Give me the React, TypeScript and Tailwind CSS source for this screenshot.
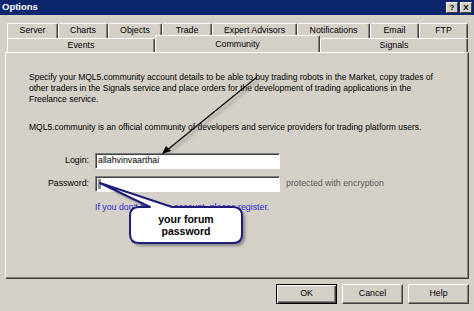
const font = { fontFamily: '"Liberation Sans", Arial, sans-serif' };

const topTabs = [
  { label: 'Server', w: 'w-[51px]' },
  { label: 'Charts', w: 'w-[50px]' },
  { label: 'Objects', w: 'w-[54px]' },
  { label: 'Trade', w: 'w-[50px]' },
  { label: 'Expert Advisors', w: 'w-[85px]' },
  { label: 'Notifications', w: 'w-[73px]' },
  { label: 'Email', w: 'w-[49px]' },
  { label: 'FTP', w: 'w-[49px]' },
];

function Tab({ label, w }: { label: string; w: string }) {
  return (
    <div
      className={`${w} flex h-full items-center justify-center rounded-t-[2px] border-t border-l border-r border-t-white border-l-white border-r-[#404040] shadow-[inset_-1px_0_0_#808080]`}
    >
      {label}
    </div>
  );
}

function Button({ label, primary }: { label: string; primary?: boolean }) {
  return (
    <div
      className={`flex h-[20px] w-[61px] items-center justify-center ${
        primary
          ? 'border border-black shadow-[inset_1px_1px_0_#fff,inset_-1px_-1px_0_#404040,inset_-2px_-2px_0_#808080]'
          : 'border border-t-white border-l-white border-r-[#404040] border-b-[#404040] shadow-[inset_-1px_-1px_0_#808080]'
      }`}
    >
      {label}
    </div>
  );
}

function Field({ children }: { children?: React.ReactNode }) {
  return (
    <div className="flex h-[16px] w-[185px] items-center border border-t-[#808080] border-l-[#808080] border-r-white border-b-white bg-white pl-[2px] shadow-[inset_1px_1px_0_#404040]">
      {children}
    </div>
  );
}

export default function App() {
  return (
    <div
      className="relative h-[311px] w-[474px] overflow-hidden bg-[#d4d0c8] text-[8.5px] text-black"
      style={font}
    >
      {/* title bar */}
      <div className="flex h-[15px] items-center justify-between bg-[#0b266c] pl-[2px] pr-[2px]">
        <span className="text-[9.5px] font-bold text-white">Options</span>
        <div className="flex gap-[2px]">
          <div className="flex h-[11px] w-[12px] items-center justify-center border border-t-white border-l-white border-r-[#404040] border-b-[#404040] bg-[#d4d0c8] text-[8px] font-bold">
            ?
          </div>
          <div className="flex h-[11px] w-[12px] items-center justify-center border border-t-white border-l-white border-r-[#404040] border-b-[#404040] bg-[#d4d0c8] text-[8px] font-bold">
            X
          </div>
        </div>
      </div>

      {/* tabs */}
      <div className="mt-[8px] pl-[7px] text-[8.8px]">
        <div className="flex h-[15px]">
          {topTabs.map((t) => (
            <Tab key={t.label} {...t} />
          ))}
        </div>
        <div className="flex h-[14px] items-end">
          <div className="h-[14px]">
            <Tab label="Events" w="w-[148px]" />
          </div>
          <div className="relative z-10 flex h-[17px] w-[165px] items-start justify-center rounded-t-[2px] border-t border-l border-r border-t-white border-l-white border-r-[#404040] bg-[#d4d0c8] pt-[2px] shadow-[inset_-1px_0_0_#808080]">
            Community
          </div>
          <div className="h-[14px]">
            <Tab label="Signals" w="w-[148px]" />
          </div>
        </div>
      </div>

      {/* panel */}
      <div className="ml-[5px] h-[227px] w-[464px] border border-t-white border-l-white border-r-[#404040] border-b-[#404040] pl-[23px] pt-[19px] shadow-[inset_-1px_-1px_0_#808080]">
        <p className="leading-[11px]">
          Specify your MQL5.community account details to be able to buy trading robots in the Market, copy trades of
          <br />
          other traders in the Signals service and place orders for the development of trading applications in the
          <br />
          Freelance service.
        </p>
        <p className="mt-[17px] leading-[11px]">
          MQL5.community is an official community of developers and service providers for trading platform users.
        </p>

        <div className="-ml-[23px] mt-[20px] flex flex-col gap-[7px] text-[8.8px]">
          <div className="flex items-center gap-[6px]">
            <div className="w-[83px] text-right">Login:</div>
            <Field>allahvinvaarthai</Field>
          </div>
          <div className="flex items-center gap-[6px]">
            <div className="w-[83px] text-right">Password:</div>
            <Field>
              <div className="h-[10px] w-[3px] bg-[#8a8a8a]" />
            </Field>
            <span className="text-[#5a5a5a]">protected with encryption</span>
          </div>
          <div className="ml-[89px] mt-[2px] text-[#2a2ad8]">
            If you don't have an account, please register.
          </div>
        </div>
      </div>

      {/* buttons */}
      <div className="mt-[5px] flex justify-end gap-[5px] pr-[5px] text-[8.8px]">
        <Button label="OK" primary />
        <Button label="Cancel" />
        <Button label="Help" />
      </div>

      {/* annotations */}
      <svg className="pointer-events-none absolute inset-0" width="474" height="311">
        <defs>
          <filter id="blur" x="-20%" y="-20%" width="140%" height="140%">
            <feGaussianBlur stdDeviation="1.5" />
          </filter>
        </defs>
        <line x1="259" y1="80" x2="166" y2="155" stroke="#777" strokeWidth="2" opacity="0.5" filter="url(#blur)" />
        <line x1="257" y1="77" x2="166" y2="151" stroke="#000" strokeWidth="1.2" />
        <polygon points="162,154 166,146 171,151" fill="#000" />
        <path
          d="M142 210 L153 210 L103 186 L175 210 L236 210 Q245 210 245 219 L245 237 Q245 246 236 246 L142 246 Q133 246 133 237 L133 219 Q133 210 142 210 Z"
          fill="#555"
          opacity="0.6"
          filter="url(#blur)"
        />
        <path
          d="M139 207 L150 207 L100 183 L172 207 L233 207 Q242 207 242 216 L242 234 Q242 243 233 243 L139 243 Q130 243 130 234 L130 216 Q130 207 139 207 Z"
          fill="#fff"
          stroke="#1e1e78"
          strokeWidth="2"
          strokeLinejoin="round"
        />
      </svg>
      <div className="absolute left-[130px] top-[207px] flex h-[36px] w-[112px] flex-col items-center justify-center text-[10.5px] font-bold leading-[12px]">
        <span>your forum</span>
        <span>password</span>
      </div>
    </div>
  );
}
